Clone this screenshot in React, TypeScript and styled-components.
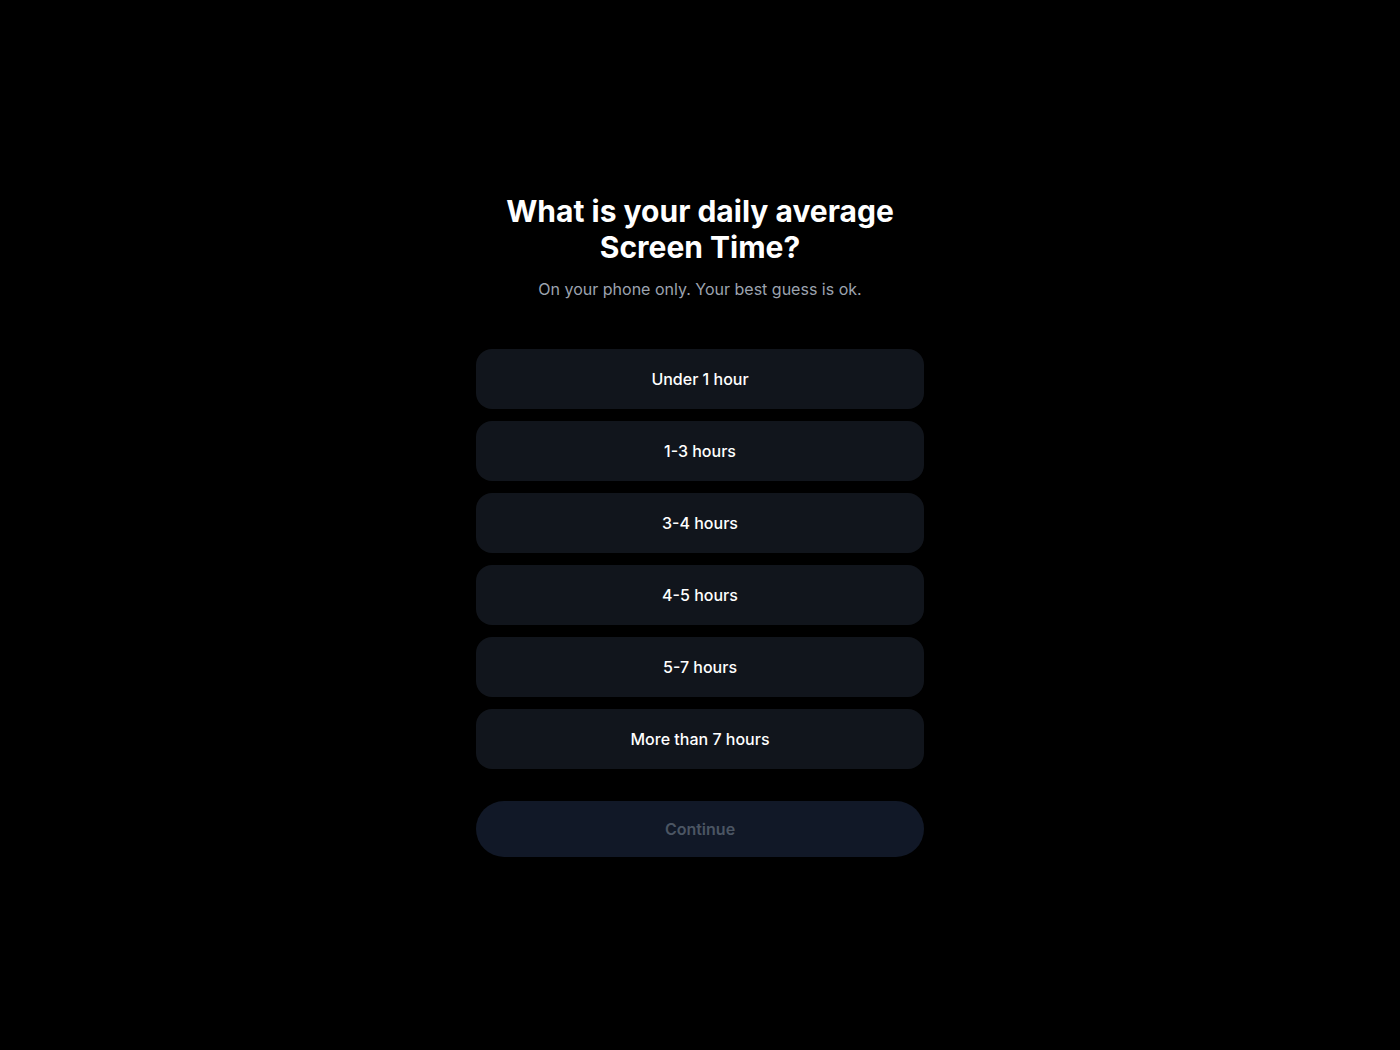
import { useState } from 'react'
import styled, { createGlobalStyle } from 'styled-components'

const options = ['Under 1 hour', '1-3 hours', '3-4 hours', '4-5 hours', '5-7 hours', 'More than 7 hours']

const GlobalStyle = createGlobalStyle`
  html, body {
    margin: 0;
    padding: 0;
    background: #000;
  }
  body {
    font-family: Inter, "Noto Sans", sans-serif;
    -webkit-font-smoothing: antialiased;
  }
`

const App = () => {
  const [selected, setSelected] = useState<string | null>(null)

  return (
    <>
      <GlobalStyle />
      <Page>
        <Panel>
          <Title>
            What is your daily average
            <br />
            Screen Time?
          </Title>
          <Subtitle>On your phone only. Your best guess is ok.</Subtitle>
          <OptionList>
            {options.map((option) => (
              <Option key={option} $active={selected === option} onClick={() => setSelected(option)}>
                {option}
              </Option>
            ))}
          </OptionList>
          <ContinueButton disabled={!selected}>Continue</ContinueButton>
        </Panel>
      </Page>
    </>
  )
}

const Page = styled.main`
  min-height: 1050px;
  display: flex;
  align-items: center;
  justify-content: center;
  background: #000;
`

const Panel = styled.div`
  width: 448px;
  display: flex;
  flex-direction: column;
  align-items: stretch;
  text-align: center;
`

const Title = styled.h1`
  margin: 0;
  font-size: 30px;
  line-height: 36px;
  font-weight: 700;
  color: #fff;
`

const Subtitle = styled.p`
  margin: 12px 0 0;
  font-size: 16px;
  line-height: 24px;
  color: #9ca3af;
`

const OptionList = styled.div`
  margin-top: 48px;
  display: flex;
  flex-direction: column;
  gap: 12px;
`

const Option = styled.button<{ $active: boolean }>`
  height: 60px;
  border: 1px solid ${({ $active }) => ($active ? '#3b82f6' : 'transparent')};
  border-radius: 16px;
  background: #11151c;
  color: #fff;
  font-family: inherit;
  font-size: 16px;
  font-weight: 500;
  cursor: pointer;
`

const ContinueButton = styled.button`
  margin-top: 32px;
  height: 56px;
  border: none;
  border-radius: 28px;
  background: #111827;
  color: #fff;
  font-family: inherit;
  font-size: 16px;
  font-weight: 600;
  cursor: pointer;

  &:disabled {
    color: #4b5563;
    cursor: default;
  }
`

export default App
